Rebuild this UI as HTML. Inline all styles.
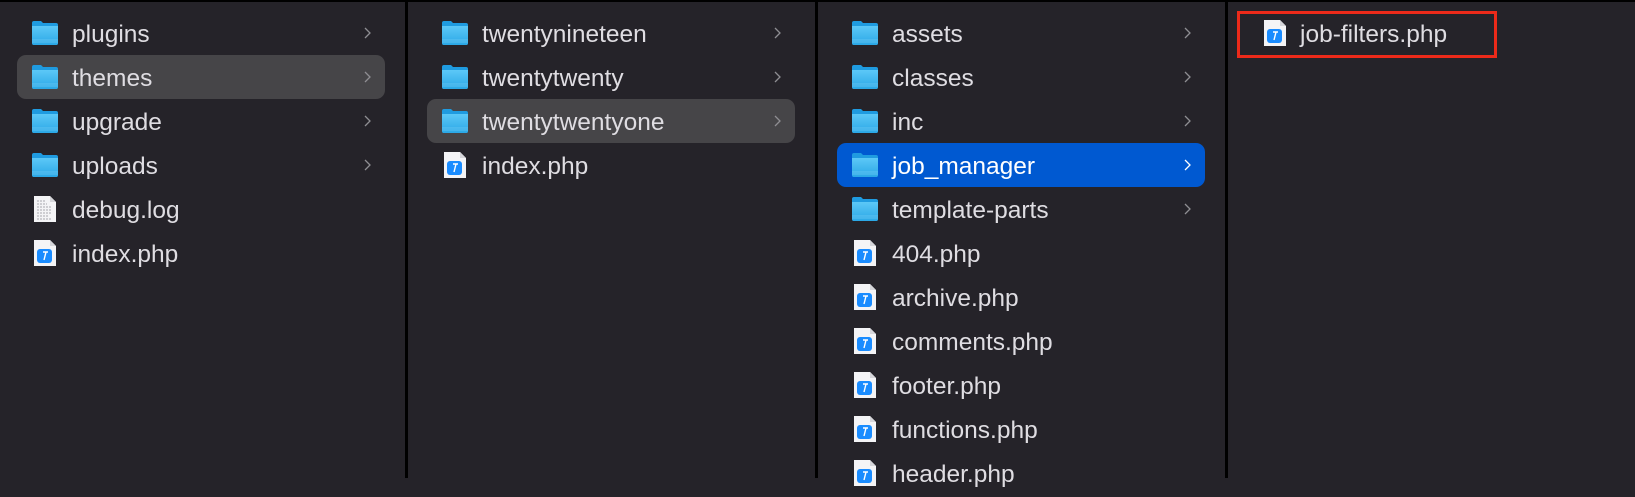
<!DOCTYPE html>
<html><head><meta charset="utf-8"><style>
*{margin:0;padding:0;box-sizing:border-box}
html,body{background:#252329}
body{width:1635px;height:478px;overflow:hidden;position:relative;font-family:"Liberation Sans",sans-serif;color:#dfdde2}
.top{position:absolute;left:0;top:0;width:1635px;height:2px;background:#000}
.div{position:absolute;top:0;width:3px;height:478px;background:#000}
.hl{position:absolute;height:44px;width:368px;border-radius:9px;background:#464548}
.hl.blue{background:#0059d1}
.t{position:absolute;font-size:24.5px;line-height:44px;height:44px;white-space:nowrap;margin-top:2px}
.ic{position:absolute}
.ch{position:absolute}
</style></head><body>
<div class="top"></div>
<div class="div" style="left:405px"></div>
<div class="div" style="left:815px"></div>
<div class="div" style="left:1225px"></div>

<div class="hl" style="left:17px;top:55px"></div>
<div class="hl" style="left:427px;top:99px"></div>
<div class="hl blue" style="left:837px;top:143px"></div>

<svg width="0" height="0" style="position:absolute">
<defs>
<linearGradient id="fg" x1="0" y1="0" x2="0" y2="1"><stop offset="0" stop-color="#5cc8f7"/><stop offset="1" stop-color="#2aa7e6"/></linearGradient>
<symbol id="folder" viewBox="0 0 28 26"><path d="M1 3 Q1 1 3 1 H10 L12 3 H25 Q27 3 27 5 V23 Q27 25 25 25 H3 Q1 25 1 23 Z" fill="#1f9be0"/><path d="M1 6 H27 V23 Q27 25 25 25 H3 Q1 25 1 23 Z" fill="url(#fg)"/><path d="M1 20 H27 M1 22 H27" stroke="#84d5f9" stroke-width=".6"/></symbol>
<symbol id="php" viewBox="0 0 24 28"><path d="M1 1 H17 L23 7 V27 H1 Z" fill="#f4f4f6"/><path d="M17 1 V7 H23" fill="#d6d6da"/><rect x="4" y="10" width="15" height="14" rx="3" fill="#1a8cff"/><path d="M10 13 H15 M13 13 L11 21" stroke="#fff" stroke-width="1.4"/></symbol>
<symbol id="log" viewBox="0 0 24 28"><path d="M1 1 H17 L23 7 V27 H1 Z" fill="#f4f4f6"/><path d="M17 1 V7 H23" fill="#d6d6da"/><path d="M4 6h9M4 9h10M4 12h15M4 15h14M4 18h15M4 21h12M4 24h15" stroke="#b8b8bc" stroke-width="1.2" stroke-dasharray="2 1"/></symbol>
<symbol id="chev" viewBox="0 0 10 16"><path d="M3 3 L8 8 L3 13" fill="none" stroke="#8f8e93" stroke-width="1.3"/></symbol>
<symbol id="chevw" viewBox="0 0 10 16"><path d="M3 3 L8 8 L3 13" fill="none" stroke="#fff" stroke-width="1.3"/></symbol>
</defs></svg>

<!-- col1 -->
<svg class="ic" style="left:31px;top:20px" width="28" height="26"><use href="#folder"/></svg><div class="t" style="left:72px;top:11px">plugins</div><svg class="ch" style="left:362px;top:25px" width="10" height="16"><use href="#chev"/></svg>
<svg class="ic" style="left:31px;top:64px" width="28" height="26"><use href="#folder"/></svg><div class="t" style="left:72px;top:55px">themes</div><svg class="ch" style="left:362px;top:69px" width="10" height="16"><use href="#chev"/></svg>
<svg class="ic" style="left:31px;top:108px" width="28" height="26"><use href="#folder"/></svg><div class="t" style="left:72px;top:99px">upgrade</div><svg class="ch" style="left:362px;top:113px" width="10" height="16"><use href="#chev"/></svg>
<svg class="ic" style="left:31px;top:152px" width="28" height="26"><use href="#folder"/></svg><div class="t" style="left:72px;top:143px">uploads</div><svg class="ch" style="left:362px;top:157px" width="10" height="16"><use href="#chev"/></svg>
<svg class="ic" style="left:33px;top:195px" width="24" height="28"><use href="#log"/></svg><div class="t" style="left:72px;top:187px">debug.log</div>
<svg class="ic" style="left:33px;top:239px" width="24" height="28"><use href="#php"/></svg><div class="t" style="left:72px;top:231px">index.php</div>

<!-- col2 -->
<svg class="ic" style="left:441px;top:20px" width="28" height="26"><use href="#folder"/></svg><div class="t" style="left:482px;top:11px">twentynineteen</div><svg class="ch" style="left:772px;top:25px" width="10" height="16"><use href="#chev"/></svg>
<svg class="ic" style="left:441px;top:64px" width="28" height="26"><use href="#folder"/></svg><div class="t" style="left:482px;top:55px">twentytwenty</div><svg class="ch" style="left:772px;top:69px" width="10" height="16"><use href="#chev"/></svg>
<svg class="ic" style="left:441px;top:108px" width="28" height="26"><use href="#folder"/></svg><div class="t" style="left:482px;top:99px">twentytwentyone</div><svg class="ch" style="left:772px;top:113px" width="10" height="16"><use href="#chev"/></svg>
<svg class="ic" style="left:443px;top:151px" width="24" height="28"><use href="#php"/></svg><div class="t" style="left:482px;top:143px">index.php</div>

<!-- col3 -->
<svg class="ic" style="left:851px;top:20px" width="28" height="26"><use href="#folder"/></svg><div class="t" style="left:892px;top:11px">assets</div><svg class="ch" style="left:1182px;top:25px" width="10" height="16"><use href="#chev"/></svg>
<svg class="ic" style="left:851px;top:64px" width="28" height="26"><use href="#folder"/></svg><div class="t" style="left:892px;top:55px">classes</div><svg class="ch" style="left:1182px;top:69px" width="10" height="16"><use href="#chev"/></svg>
<svg class="ic" style="left:851px;top:108px" width="28" height="26"><use href="#folder"/></svg><div class="t" style="left:892px;top:99px">inc</div><svg class="ch" style="left:1182px;top:113px" width="10" height="16"><use href="#chev"/></svg>
<svg class="ic" style="left:851px;top:152px" width="28" height="26"><use href="#folder"/></svg><div class="t" style="left:892px;top:143px;color:#fff">job_manager</div><svg class="ch" style="left:1182px;top:157px" width="10" height="16"><use href="#chevw"/></svg>
<svg class="ic" style="left:851px;top:196px" width="28" height="26"><use href="#folder"/></svg><div class="t" style="left:892px;top:187px">template-parts</div><svg class="ch" style="left:1182px;top:201px" width="10" height="16"><use href="#chev"/></svg>
<svg class="ic" style="left:853px;top:239px" width="24" height="28"><use href="#php"/></svg><div class="t" style="left:892px;top:231px">404.php</div>
<svg class="ic" style="left:853px;top:283px" width="24" height="28"><use href="#php"/></svg><div class="t" style="left:892px;top:275px">archive.php</div>
<svg class="ic" style="left:853px;top:327px" width="24" height="28"><use href="#php"/></svg><div class="t" style="left:892px;top:319px">comments.php</div>
<svg class="ic" style="left:853px;top:371px" width="24" height="28"><use href="#php"/></svg><div class="t" style="left:892px;top:363px">footer.php</div>
<svg class="ic" style="left:853px;top:415px" width="24" height="28"><use href="#php"/></svg><div class="t" style="left:892px;top:407px">functions.php</div>
<svg class="ic" style="left:853px;top:459px" width="24" height="28"><use href="#php"/></svg><div class="t" style="left:892px;top:451px">header.php</div>

<!-- col4 -->
<div style="position:absolute;left:1237px;top:11px;width:260px;height:47px;border:3.5px solid #ec2a1a"></div>
<svg class="ic" style="left:1263px;top:19px" width="24" height="28"><use href="#php"/></svg><div class="t" style="left:1300px;top:11px">job-filters.php</div>
</body></html>
